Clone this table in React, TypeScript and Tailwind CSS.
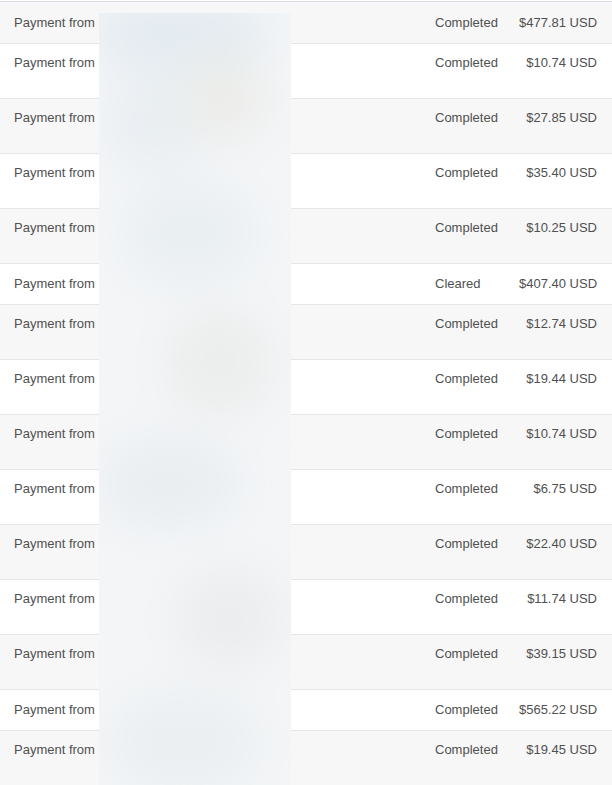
const rows = [
  { status: "Completed", amount: "$477.81 USD", short: true },
  { status: "Completed", amount: "$10.74 USD" },
  { status: "Completed", amount: "$27.85 USD" },
  { status: "Completed", amount: "$35.40 USD" },
  { status: "Completed", amount: "$10.25 USD" },
  { status: "Cleared", amount: "$407.40 USD", short: true },
  { status: "Completed", amount: "$12.74 USD" },
  { status: "Completed", amount: "$19.44 USD" },
  { status: "Completed", amount: "$10.74 USD" },
  { status: "Completed", amount: "$6.75 USD" },
  { status: "Completed", amount: "$22.40 USD" },
  { status: "Completed", amount: "$11.74 USD" },
  { status: "Completed", amount: "$39.15 USD" },
  { status: "Completed", amount: "$565.22 USD", short: true },
  { status: "Completed", amount: "$19.45 USD" },
];

// blurred blobs hiding the payer names
const blobs = [
  { cx: 80, cy: 20, rx: 90, ry: 40, fill: "#e4ebf1" },
  { cx: 55, cy: 110, rx: 50, ry: 45, fill: "#e9eef2" },
  { cx: 125, cy: 85, rx: 45, ry: 45, fill: "#ecedea" },
  { cx: 90, cy: 220, rx: 65, ry: 50, fill: "#eaeff2" },
  { cx: 120, cy: 350, rx: 55, ry: 55, fill: "#eceeed" },
  { cx: 70, cy: 470, rx: 70, ry: 45, fill: "#eaeef1" },
  { cx: 130, cy: 605, rx: 55, ry: 50, fill: "#ebedee" },
  { cx: 85, cy: 730, rx: 75, ry: 50, fill: "#ebeff1" },
];

const App = () => {
  return (
    <div className="relative w-[612px] h-[785px] overflow-hidden bg-white font-['Liberation_Sans',Arial,sans-serif] text-[13px] leading-4 text-[#505050]">
      <div className="h-px bg-white" />
      <div className="border-t border-[#d7dde2]">
        {rows.map((row, i) => (
          <div
            key={i}
            className={`flex whitespace-nowrap border-b border-[#e6e6e6] ${i === 0 ? "pt-[13px] h-[42px]" : row.short ? "pt-3 h-[41px]" : "pt-[11px] h-[55px]"} ${i % 2 === 0 ? "bg-[#f7f7f7]" : "bg-white"}`}
          >
            <div className="flex-1 pl-[14px]">Payment from</div>
            <div className="w-[84px]">{row.status}</div>
            <div className="w-[78px] text-right">{row.amount}</div>
            <div className="w-[15px]" />
          </div>
        ))}
      </div>

      {/* blurred-out names */}
      <div className="absolute left-[99px] top-[13px] bottom-0 w-[192px] bg-[#f3f5f7]">
        <svg width="192" height="772" viewBox="0 0 192 772" className="block">
          <defs>
            <filter id="soft" x="-50%" y="-50%" width="200%" height="200%">
              <feGaussianBlur stdDeviation="22" />
            </filter>
          </defs>
          <g filter="url(#soft)">
            {blobs.map((b, i) => (
              <ellipse key={i} cx={b.cx} cy={b.cy} rx={b.rx} ry={b.ry} fill={b.fill} />
            ))}
          </g>
        </svg>
      </div>
    </div>
  );
};

export default App;
